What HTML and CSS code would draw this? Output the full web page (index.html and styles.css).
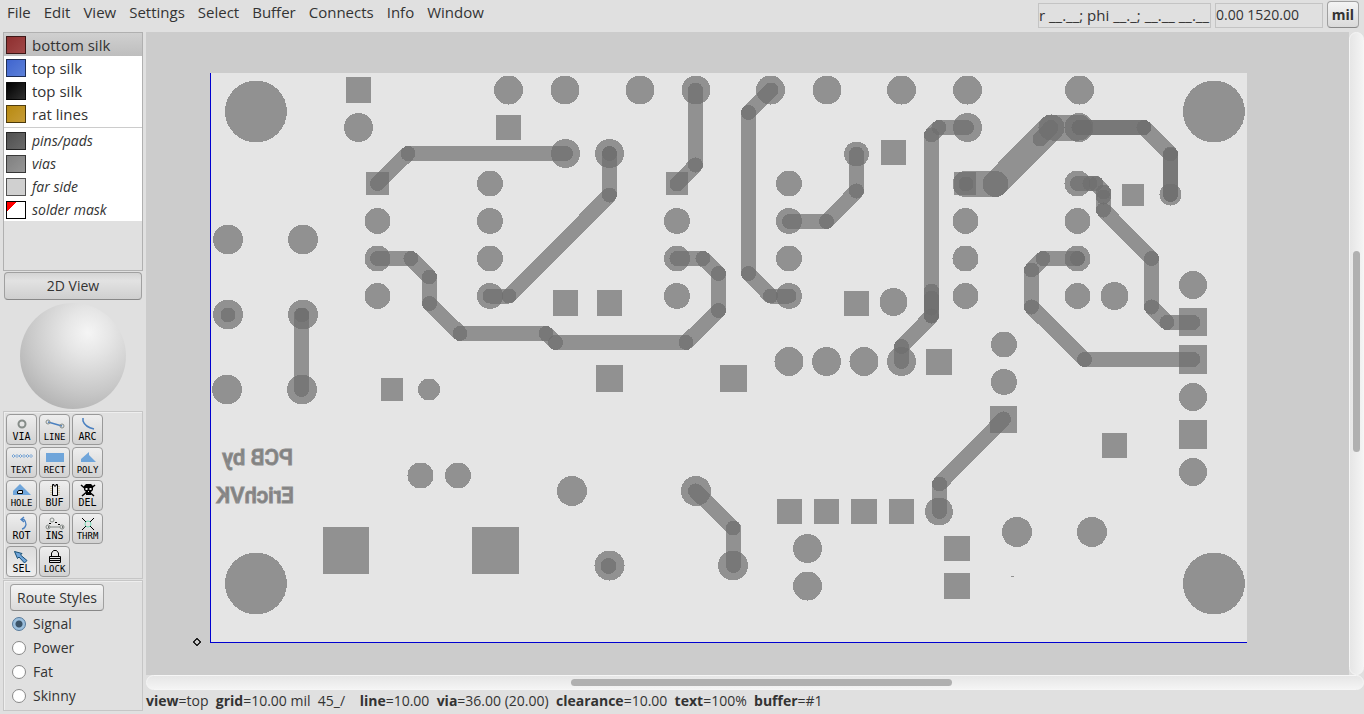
FILE: index.html
```html
<!DOCTYPE html>
<html lang="en">
<head>
  <meta charset="UTF-8">
  <meta name="viewport" content="width=device-width, initial-scale=1.0">
  <title>PCB</title>
  <link rel="stylesheet" href="styles.css">
</head>
<body>

  <!-- TOP BAR -->
  <header class="topbar">
    <nav class="menu">
      <button>File</button>
      <button>Edit</button>
      <button>View</button>
      <button>Settings</button>
      <button>Select</button>
      <button>Buffer</button>
      <button>Connects</button>
      <button>Info</button>
      <button>Window</button>
    </nav>
    <div class="readouts">
      <output class="readout polar">r __.__; phi __._; __.__ __.__</output>
      <output class="readout position">0.00 1520.00</output>
      <button class="btn units">mil</button>
    </div>
  </header>

  <div class="main">

    <!-- SIDEBAR -->
    <aside class="sidebar">
      <div class="layers">
        <label class="layer selected"><input type="checkbox" class="swatch red" checked>bottom silk</label>
        <label class="layer"><input type="checkbox" class="swatch blue" checked>top silk</label>
        <label class="layer"><input type="checkbox" class="swatch black" checked>top silk</label>
        <label class="layer"><input type="checkbox" class="swatch gold" checked>rat lines</label>
        <hr>
        <label class="layer special"><input type="checkbox" class="swatch dark" checked>pins/pads</label>
        <label class="layer special"><input type="checkbox" class="swatch mid" checked>vias</label>
        <label class="layer special"><input type="checkbox" class="swatch light" checked>far side</label>
        <label class="layer special"><input type="checkbox" class="swatch mask">solder mask</label>
      </div>

      <button class="btn view-btn">2D View</button>
      <div class="trackball"></div>

      <div class="frame tools">
        <button class="tool">
          <svg viewBox="0 0 28 15"><circle cx="14" cy="7" r="3.500" fill="none" stroke="#858c88" stroke-width="2"/></svg>
          <span>VIA</span>
        </button>
        <button class="tool">
          <svg viewBox="0 0 28 15"><path d="M7 5L21 9" stroke="#4a80c0" stroke-width="1.500"/><g fill="none" stroke="#858c88"><circle cx="7" cy="5" r="2"/><circle cx="21" cy="9" r="2"/></g></svg>
          <span class="long">LINE</span>
        </button>
        <button class="tool">
          <svg viewBox="0 0 28 15"><path d="M9 1V4Q11 10 20 12" fill="none" stroke="#4a80c0" stroke-width="1.500"/></svg>
          <span>ARC</span>
        </button>
        <button class="tool">
          <svg viewBox="0 0 28 15"><path d="M4 6l1.500-1.500 1.500 1.500-1.500 1.500zM7.500 6l1.500-1.500 1.500 1.500-1.500 1.500zM11 6l1.500-1.500 1.500 1.500-1.500 1.500zM14.500 6l1.500-1.500 1.500 1.500-1.500 1.500zM18 6l1.500-1.500 1.500 1.500-1.500 1.500zM21.500 6l1.500-1.500 1.500 1.500-1.500 1.500z" fill="none" stroke="#5b93cf" stroke-width=".8"/></svg>
          <span class="long">TEXT</span>
        </button>
        <button class="tool">
          <svg viewBox="0 0 28 15"><path d="M5 3h18v9H5z" fill="#6fa5da"/></svg>
          <span class="long">RECT</span>
        </button>
        <button class="tool">
          <svg viewBox="0 0 28 15"><path d="M7 12V9L15 2V5L22 12z" fill="#6fa5da"/></svg>
          <span class="long">POLY</span>
        </button>
        <button class="tool">
          <svg viewBox="0 0 28 15"><path d="M5 12V8L12 1L23 12z" fill="#6fa5da"/><path d="M9.500 10.500V8.500L11 7.500H14.500V10.500z" fill="#eee" stroke="#000"/></svg>
          <span class="long">HOLE</span>
        </button>
        <button class="tool">
          <svg viewBox="0 0 28 15"><path d="M9 3.500h10M9 5.500h10M9 7.500h10M9 9.500h10M9 11.500h10" stroke="#d3c8a8"/><path d="M11.500 1.500H13V3H15V1.500H16.500V12.500H11.500z" fill="#eee" stroke="#000"/></svg>
          <span>BUF</span>
        </button>
        <button class="tool">
          <svg viewBox="0 0 28 15"><path d="M7 2l13 11M21 2L8 13" stroke="#000" stroke-width="1.500"/><path d="M10 3l2-2h5l2 2v4l-2 2v3h-5V9l-2-2z"/><path d="M11.500 5h2v2h-2zM15.500 5h2v2h-2zM14 8h1v1h-1z" fill="#eee"/></svg>
          <span>DEL</span>
        </button>
        <button class="tool">
          <svg viewBox="0 0 28 15"><path d="M13 3.500h3q2 2 2 5q-1 4-4 4.500M16 1l-3 2.500 3 2.500" fill="none" stroke="#4a80c0" stroke-width="1.300"/></svg>
          <span>ROT</span>
        </button>
        <button class="tool">
          <svg viewBox="0 0 28 15"><g fill="none" stroke="#858c88"><path d="M9 11h10"/><circle cx="7" cy="11" r="2"/><circle cx="21" cy="11" r="2"/><circle cx="11" cy="4" r="2"/></g><path d="M8 7.500h2M14 6.500h2M17 8.500h2M7 11h1M21 11h1" stroke="#000"/></svg>
          <span>INS</span>
        </button>
        <button class="tool">
          <svg viewBox="0 0 28 15"><circle cx="14" cy="8" r="3" fill="none" stroke="#76d7b5"/><path d="M8 2l4 4M20 2l-4 4M8 14l4-4M20 14l-4-4" stroke="#000"/></svg>
          <span class="long">THRM</span>
        </button>
        <button class="tool active">
          <svg viewBox="0 0 28 15"><path d="M6.500 2.500L14 4.500L12.500 6L19 11.500L16.500 14L11 8L9.500 9.500z" fill="#6fa5da" stroke="#174f75"/></svg>
          <span>SEL</span>
        </button>
        <button class="tool">
          <svg viewBox="0 0 28 15"><path d="M10.500 7V4L12.500 1.500H15.500L17.500 4V7M8.500 7.500h11v6h-11zM9 9.500h10M9 11.500h10" fill="none" stroke="#000"/></svg>
          <span class="long">LOCK</span>
        </button>
      </div>

      <div class="frame routes">
        <button class="btn route-btn">Route Styles</button>
        <label><input type="radio" name="route" checked>Signal</label>
        <label><input type="radio" name="route">Power</label>
        <label><input type="radio" name="route">Fat</label>
        <label><input type="radio" name="route">Skinny</label>
      </div>
    </aside>

    <!-- WORK AREA -->
    <main class="workspace">
      <div class="canvas-row">
        <svg class="canvas" viewBox="146 32 1203 643" shape-rendering="crispEdges">
          <rect class="board" x="210" y="73" width="1037" height="570"/>

          <!-- mounting holes -->
          <g class="copper">
            <circle cx="256" cy="111.500" r="31"/><circle cx="1214" cy="111.500" r="31"/>
            <circle cx="256" cy="583.500" r="31"/><circle cx="1214" cy="583.500" r="31"/>
          </g>

          <!-- square pads -->
          <g class="copper">
            <rect x="346" y="77" width="25" height="26"/>
            <rect x="496" y="115" width="25" height="25"/>
            <rect x="366" y="172" width="23" height="23"/>
            <rect x="666" y="172" width="22" height="23"/>
            <rect x="881" y="140" width="25" height="25"/>
            <rect x="954" y="172" width="22" height="23"/>
            <rect x="1122" y="184" width="22" height="22"/>
            <rect x="553" y="290" width="25" height="26"/>
            <rect x="597" y="290" width="25" height="26"/>
            <rect x="844" y="291" width="25" height="25"/>
            <rect x="926" y="349" width="26" height="26"/>
            <rect x="596" y="365" width="27" height="27"/>
            <rect x="720" y="365" width="27" height="27"/>
            <rect x="381" y="378" width="22" height="23"/>
            <rect x="1179" y="308" width="28" height="28"/>
            <rect x="1179" y="345" width="28" height="29"/>
            <rect x="1179" y="420" width="28" height="29"/>
            <rect x="990" y="406" width="27" height="27"/>
            <rect x="1102" y="433" width="25" height="25"/>
            <rect x="777" y="499" width="25" height="25"/>
            <rect x="814" y="499" width="25" height="25"/>
            <rect x="851" y="499" width="26" height="25"/>
            <rect x="889" y="499" width="25" height="25"/>
            <rect x="944" y="536" width="26" height="25"/>
            <rect x="944" y="573" width="26" height="26"/>
            <rect x="323" y="527" width="46" height="47"/>
            <rect x="472" y="527" width="47" height="47"/>
            <rect x="1011" y="576" width="3" height="1"/>
          </g>

          <!-- round pads -->
          <g class="copper">
            <circle cx="508.500" cy="90" r="14.500"/><circle cx="565" cy="90" r="14.500"/>
            <circle cx="640" cy="90" r="14.500"/><circle cx="696" cy="90" r="14.500"/>
            <circle cx="770.500" cy="90" r="14.500"/><circle cx="827" cy="90" r="14.500"/>
            <circle cx="901.500" cy="90" r="14.500"/><circle cx="967.500" cy="90" r="14.500"/>
            <circle cx="1079.500" cy="90" r="14.500"/><circle cx="358.500" cy="127.500" r="14.500"/>
            <circle cx="967.500" cy="127.500" r="14.500"/><circle cx="1079" cy="127.500" r="14.500"/>
            <circle cx="565.500" cy="153.500" r="14.500"/><circle cx="609.500" cy="153.500" r="14.500"/>
            <circle cx="856.500" cy="154" r="12.500"/><circle cx="1170.500" cy="194.500" r="11"/>
            <circle cx="377.500" cy="221" r="13"/><circle cx="377.500" cy="258.500" r="13"/><circle cx="377.500" cy="296" r="13"/>
            <circle cx="490" cy="183.500" r="13"/><circle cx="490" cy="221" r="13"/><circle cx="490" cy="258.500" r="13"/><circle cx="490" cy="296" r="13"/>
            <circle cx="677" cy="221" r="13"/><circle cx="677" cy="258.500" r="13"/><circle cx="677" cy="296" r="13"/>
            <circle cx="789" cy="183.500" r="13"/><circle cx="789" cy="221" r="13"/><circle cx="789" cy="258.500" r="13"/><circle cx="789" cy="296" r="13"/>
            <circle cx="965.500" cy="221" r="13"/><circle cx="965.500" cy="258.500" r="13"/><circle cx="965.500" cy="296" r="13"/>
            <circle cx="1077.500" cy="183.500" r="13"/><circle cx="1077.500" cy="221" r="13"/><circle cx="1077.500" cy="258.500" r="13"/><circle cx="1077.500" cy="296" r="13"/>
            <circle cx="228" cy="239.500" r="15"/><circle cx="303" cy="239.500" r="15"/>
            <circle cx="228" cy="314.500" r="15"/><circle cx="303" cy="314.500" r="15"/>
            <circle cx="227" cy="389.500" r="15"/><circle cx="302" cy="389.500" r="15"/>
            <circle cx="893.500" cy="302" r="14"/><circle cx="1114.500" cy="296" r="14"/><circle cx="1193" cy="285" r="14"/>
            <circle cx="1193" cy="397" r="14"/><circle cx="1193" cy="472" r="14"/>
            <circle cx="789" cy="361.500" r="14.500"/><circle cx="826.500" cy="361.500" r="14.500"/>
            <circle cx="864" cy="361.500" r="14.500"/><circle cx="901.500" cy="361.500" r="14.500"/>
            <circle cx="1004" cy="344.500" r="13"/><circle cx="1004" cy="382" r="13"/>
            <circle cx="429" cy="389.500" r="11"/><circle cx="420.500" cy="475.500" r="13"/><circle cx="458" cy="475.500" r="13"/>
            <circle cx="572" cy="491" r="15"/><circle cx="696" cy="491" r="15"/>
            <circle cx="609.500" cy="565.500" r="15"/><circle cx="733" cy="565.500" r="15"/>
            <circle cx="807.500" cy="548.500" r="14.500"/><circle cx="807.500" cy="586" r="14.500"/>
            <circle cx="939" cy="511.500" r="14"/><circle cx="1017" cy="532" r="15"/><circle cx="1092" cy="532" r="15"/>
            <!-- vias in pads -->
            <circle cx="228" cy="315" r="7.500"/><circle cx="302" cy="315" r="7.500"/>
            <circle cx="609.500" cy="153.500" r="7.500"/><circle cx="608.500" cy="566" r="8"/>
            <circle cx="966" cy="184" r="7.500"/><circle cx="1077.500" cy="258.500" r="7.500"/>
          </g>

          <!-- tracks, one path per segment so the joints overlap -->
          <g class="track">
            <path d="M377.500 183.500L408 153.500"/><path d="M408 153.500H565.500"/>
            <path d="M377.500 258.500H411"/><path d="M411 258.500L429.500 277"/><path d="M429.500 277V303.500"/>
            <path d="M429.500 303.500L460 333.500"/><path d="M460 333.500H546"/><path d="M546 333.500L555.500 342.500"/>
            <path d="M555.500 342.500H686"/><path d="M686 342.500L718.500 310.500"/><path d="M718.500 310.500V273.500"/>
            <path d="M718.500 273.500L703 258.500"/><path d="M703 258.500H677"/>
            <path d="M490 296H509"/><path d="M509 296L609.500 195"/><path d="M609.500 195V153.500"/>
            <path d="M301.500 315V389.500"/>
            <path d="M695.500 90V165"/><path d="M695.500 165L677 184"/>
            <path d="M771 90L748.500 112.500"/><path d="M748.500 112.500V273.500"/><path d="M748.500 273.500L770.500 296"/><path d="M770.500 296H789"/>
            <path d="M856.500 154V191"/><path d="M856.500 191L826.500 221.500"/><path d="M826.500 221.500H789.500"/>
            <path d="M966.500 127.500H939"/><path d="M939 127.500L931.500 135"/><path d="M931.500 135V316"/>
            <path d="M931.500 291V316"/><path d="M931.500 298V308"/><path d="M931.500 316L901.500 346.500"/><path d="M901.500 346.500V361.500"/>
            <path d="M1040 139L1051 127.500"/><path d="M1079 127.500H1144"/><path d="M1079 127.500H1144"/>
            <path d="M1144 127.500L1170.500 154"/><path d="M1170.500 154V194.500"/><path d="M1170.500 155V194.500"/>
            <path d="M1077.500 183.500H1090"/><path d="M1090 183.500H1096"/><path d="M1096 183.500L1103.500 192"/>
            <path d="M1103.500 192V197"/><path d="M1103.500 197V210"/><path d="M1103.500 210L1151.500 258.500"/>
            <path d="M1151.500 258.500V307"/><path d="M1151.500 307L1167 322.500"/><path d="M1167 322.500H1193"/>
            <path d="M1077.500 258.500H1043"/><path d="M1043 258.500L1031.500 270"/><path d="M1031.500 270V307"/>
            <path d="M1031.500 307L1084.500 359.500"/><path d="M1084.500 359.500H1193"/>
            <path d="M1003.500 419L939.500 484"/><path d="M939.500 484V511.500"/>
            <path d="M695.500 491L733 528"/><path d="M733.500 528V565.500"/>
          </g>
          <g class="track power">
            <path d="M965.500 184H995.500"/><path d="M995.500 184L1051.500 127.500"/><path d="M1051.500 127.500H1079"/>
          </g>

          <!-- silk on the far side reads mirrored -->
          <g class="silk" transform="scale(-1 1)">
            <text x="-293" y="465">PCB by</text>
            <text x="-294" y="503">ErichVK</text>
          </g>

          <path class="edge" d="M210.500 73V642.500H1247"/>
          <path class="origin" d="M193.500 642l3.500-3.500 3.500 3.500-3.500 3.500z"/>
        </svg>
        <div class="scroll vertical"><div class="thumb"></div></div>
      </div>
      <div class="scroll horizontal"><div class="thumb"></div></div>
      <footer class="status"><b>view</b>=top  <b>grid</b>=10.00 mil  45_/    <b>line</b>=10.00  <b>via</b>=36.00 (20.00)  <b>clearance</b>=10.00  <b>text</b>=100%  <b>buffer</b>=#1</footer>
    </main>
  </div>

</body>
</html>
```

FILE: styles.css
```css
* {
  box-sizing: border-box;
  margin: 0;
  padding: 0;
}

body {
  font-family: "Open Sans", "Noto Sans", sans-serif;
  font-size: 14px;
  line-height: 20px;
  color: #333;
  background: #e0e0e0;
  height: 100vh;
  display: flex;
  flex-direction: column;
  overflow: hidden;
}

button {
  font: inherit;
  color: inherit;
  background: none;
  border: none;
}

/* Top bar */
.topbar {
  height: 32px;
  flex: none;
  display: flex;
  justify-content: space-between;
  padding: 1px 5px 0 7px;
}

.menu {
  display: flex;
  gap: 13px;
  height: 22px;
  font-size: 15px;
}

.readouts {
  display: flex;
  gap: 4px;
  align-items: flex-start;
}

.readout {
  height: 25px;
  margin-top: 2px;
  border: 1px solid #c4c4c4;
  line-height: 22px;
  white-space: nowrap;
  overflow: hidden;
}

.polar {
  width: 173px;
  font-size: 15px;
}

.position {
  width: 108px;
}

.btn {
  border: 1px solid #a0a0a0;
  border-bottom-color: #888;
  border-radius: 4px;
  background: linear-gradient(#f4f4f4, #dadada);
}

.units {
  width: 32px;
  height: 27px;
  font-weight: bold;
}

/* Sidebar */
.main {
  flex: 1;
  min-height: 0;
  display: flex;
}

.sidebar {
  width: 146px;
  flex: none;
  padding: 0 3px;
  display: flex;
  flex-direction: column;
}

.layers {
  height: 239px;
  border: 1px solid #b0b0b0;
}

.layer {
  height: 23px;
  padding-left: 2px;
  display: flex;
  align-items: center;
  gap: 6px;
  font-size: 15px;
  background: #fff;
}

.layer.selected {
  background: linear-gradient(#d0d0d0, #bebebe);
}

.layer.special {
  font-size: 14px;
  font-style: italic;
}

.layers hr {
  height: 4px;
  border: solid #fff;
  border-width: 2px 0 1px;
  background: #ccc;
}

.swatch {
  appearance: none;
  width: 20px;
  height: 18px;
  border: 1px solid rgba(0, 0, 0, 0.6);
}

.red { background: linear-gradient(135deg, #8f2f2f, #a04848); }
.blue { background: linear-gradient(135deg, #4065cf, #5c80d8); }
.black { background: linear-gradient(135deg, #000, #303030); }
.gold { background: linear-gradient(135deg, #b88a10, #c69c38); }
.dark { background: linear-gradient(135deg, #505050, #6a6a6a); }
.mid { background: linear-gradient(135deg, #808080, #969696); }
.light { background: #d0d0d0; }

.mask {
  border-color: #000;
  background: linear-gradient(135deg, #f00 7px, #fff 7px);
}

.view-btn {
  height: 28px;
  margin: 1px 1px 0;
  background: linear-gradient(#d4d4d4, #e2e2e2 30%, #cfcfcf);
}

.trackball {
  width: 106px;
  height: 106px;
  margin: 3px auto 2px;
  border-radius: 50%;
  background: radial-gradient(circle at 64% 28%, #f5f5f5, #e6e6e6 22%, #c8c8c8 58%, #a0a0a0);
}

.frame {
  border: 1px solid #c6c6c6;
  box-shadow: inset 1px 1px #eee;
}

.tools {
  height: 168px;
  padding: 2px;
  display: grid;
  grid-template-columns: repeat(3, 31px);
  grid-auto-rows: 31px;
  gap: 2px;
}

.tool {
  border: 1px solid #999;
  border-radius: 4px;
  background: linear-gradient(#eee, #d2d2d2);
  display: flex;
  flex-direction: column;
  align-items: center;
  padding-top: 2px;
  color: #000;
}

.tool.active {
  background: linear-gradient(#dcdcdc, #eee);
}

.tool svg {
  width: 28px;
  height: 15px;
  flex: none;
}

.tool span {
  font: 10px/10px "DejaVu Sans Mono", monospace;
}

.tool .long {
  font-size: 9px;
}

.routes {
  height: 131px;
  margin-top: 1px;
  padding: 3px 6px;
}

.route-btn {
  display: block;
  width: 94px;
  height: 27px;
  margin-bottom: 1px;
}

.routes label {
  display: flex;
  align-items: center;
  gap: 7px;
  height: 24px;
  padding-left: 2px;
}

.routes input {
  appearance: none;
  width: 14px;
  height: 14px;
  border: 1px solid #888;
  border-radius: 50%;
  background: #fff;
}

.routes input:checked {
  border-color: #54799b;
  background: radial-gradient(circle, #3c5468 3px, #9cbfdd 4px);
}

/* Work area */
.workspace {
  flex: 1;
  min-width: 0;
  display: flex;
  flex-direction: column;
}

.canvas-row {
  flex: 1;
  min-height: 0;
  display: flex;
}

.canvas {
  flex: 1;
  min-width: 0;
  height: 100%;
  background: #ccc;
}

.board {
  fill: #e5e5e5;
}

.copper {
  fill: #6d6d6d;
  fill-opacity: 0.7;
}

.track {
  stroke: #6d6d6d;
  stroke-opacity: 0.7;
  stroke-width: 15px;
  stroke-linecap: round;
}

.power {
  stroke-width: 26px;
}

.silk {
  font: 500 22px Roboto, sans-serif;
  fill: #808080;
  stroke: #8c8c8c;
}

.edge {
  fill: none;
  stroke: #0000d0;
}

.origin {
  fill: none;
  stroke: #222;
}

.scroll {
  flex: none;
  border: 1px solid #f6f6f6;
  border-radius: 8px;
  display: flex;
}

.vertical {
  width: 15px;
  padding: 0 3px;
  flex-direction: column;
  background: linear-gradient(to right, #e6e6e6, #f4f4f4);
}

.horizontal {
  height: 15px;
  padding: 3px 0;
  background: linear-gradient(#e6e6e6, #f4f4f4);
}

.thumb {
  border-radius: 4px;
  background: #b0b0b0;
}

.vertical .thumb {
  height: 31.3%;
  position: relative;
  top: 34%;
}

.horizontal .thumb {
  width: 31.3%;
  margin-left: 34.9%;
}

.status {
  height: 24px;
  line-height: 22px;
  white-space: pre;
}
```
